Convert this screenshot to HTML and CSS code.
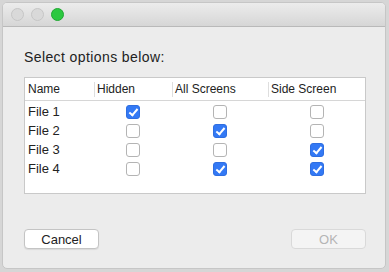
FILE: index.html
```html
<!DOCTYPE html>
<html>
<head>
    <meta charset="utf-8">
    <title>Select options</title>
    <link rel="stylesheet" href="styles.css">
</head>
<body>
<div class="window">
    <div class="titlebar">
        <span class="light off"></span>
        <span class="light off"></span>
        <span class="light green"></span>
    </div>
    <div class="content">
        <p class="prompt">Select options below:</p>
        <div class="m-table">
            <div class="row head">
                <div class="cell name">Name</div>
                <div class="cell">Hidden</div>
                <div class="cell">All Screens</div>
                <div class="cell">Side Screen</div>
            </div>
            <div class="row">
                <div class="cell name">File 1</div>
                <div class="cell box"><span class="u-chk on"></span></div>
                <div class="cell box"><span class="u-chk"></span></div>
                <div class="cell box"><span class="u-chk"></span></div>
            </div>
            <div class="row">
                <div class="cell name">File 2</div>
                <div class="cell box"><span class="u-chk"></span></div>
                <div class="cell box"><span class="u-chk on"></span></div>
                <div class="cell box"><span class="u-chk"></span></div>
            </div>
            <div class="row">
                <div class="cell name">File 3</div>
                <div class="cell box"><span class="u-chk"></span></div>
                <div class="cell box"><span class="u-chk"></span></div>
                <div class="cell box"><span class="u-chk on"></span></div>
            </div>
            <div class="row">
                <div class="cell name">File 4</div>
                <div class="cell box"><span class="u-chk"></span></div>
                <div class="cell box"><span class="u-chk on"></span></div>
                <div class="cell box"><span class="u-chk on"></span></div>
            </div>
        </div>
        <div class="buttons">
            <button class="u-btn">Cancel</button>
            <button class="u-btn disabled">OK</button>
        </div>
    </div>
</div>
</body>
</html>
```

FILE: styles.css
```css
html, body{
    margin: 0;
    padding: 0;
    height: 100%;
}
body{
    background-color: #d6d6d6;
    font-family: "Liberation Sans", Arial, sans-serif;
    color: #222;
    padding: 2px 3px 0 2px;
    box-sizing: border-box;
}
.window{
    height: 267px;
    background: #ececec;
    border: 1px solid #c6c6c6;
    border-radius: 5px;
    box-sizing: border-box;
    display: flex;
    flex-direction: column;
    overflow: hidden;
}
/* 标题栏 */
.titlebar{
    height: 23px;
    flex: none;
    display: flex;
    align-items: center;
    gap: 7px;
    padding-left: 8px;
    background: linear-gradient(#ececec, #d6d6d6);
    border-bottom: 1px solid #b9b9b9;
}
.light{
    width: 13px; height: 13px;
    border-radius: 50%;
    box-sizing: border-box;
}
.light.off{ background: #d9d9d9; border: 1px solid #c6c6c6;}
.light.green{ background: #2cc840; border: 1px solid #20a832;}

.content{
    flex: 1;
    display: flex;
    flex-direction: column;
    padding: 22px 19px 19px 21px;
}
.prompt{
    margin: 0 0 11px;
    font-size: 14px;
    line-height: 17px;
    letter-spacing: 0.4px;
}
.m-table{
    height: 117px;
    background: #fff;
    border: 1px solid #c9c9c9;
    box-sizing: border-box;
}
.row{
    display: grid;
    grid-template-columns: 69px 78px 96px 1fr;
    height: 19px;
    align-items: center;
    font-size: 13px;
}
.row.head{
    height: 22px;
    border-bottom: 1px solid #d6d6d6;
    font-size: 12px;
    margin-bottom: 1px;
}
.cell{ padding-left: 3px; white-space: nowrap;}
.head .cell + .cell{
    border-left: 1px solid #dedede;
    line-height: 15px;
    padding-left: 2px;
}
.cell.box{
    padding: 0;
    display: flex;
    justify-content: center;
}
.u-chk{
    width: 14px; height: 14px;
    box-sizing: border-box;
    border: 1px solid #b4b4b4;
    border-radius: 3px;
    background: #fff;
    position: relative;
}
.u-chk.on{
    background: #3379f5;
    border-color: #2f6ee0;
}
.u-chk.on::after{
    content: "";
    position: absolute;
    left: 4px; top: 1px;
    width: 3px; height: 7px;
    border: solid #fff;
    border-width: 0 2px 2px 0;
    transform: rotate(40deg);
}
.buttons{
    margin-top: auto;
    display: flex;
    justify-content: space-between;
}
.u-btn{
    width: 75px; height: 20px;
    padding: 0;
    font-family: inherit;
    font-size: 13px;
    color: #222;
    background: #fff;
    border: 1px solid #c4c4c4;
    border-radius: 4px;
    box-shadow: 0 1px 1px rgba(0, 0, 0, 0.08);
}
.u-btn.disabled{
    color: #b5b5b5;
    background: #f4f4f4;
    border-color: #d9d9d9;
    box-shadow: none;
}
```
